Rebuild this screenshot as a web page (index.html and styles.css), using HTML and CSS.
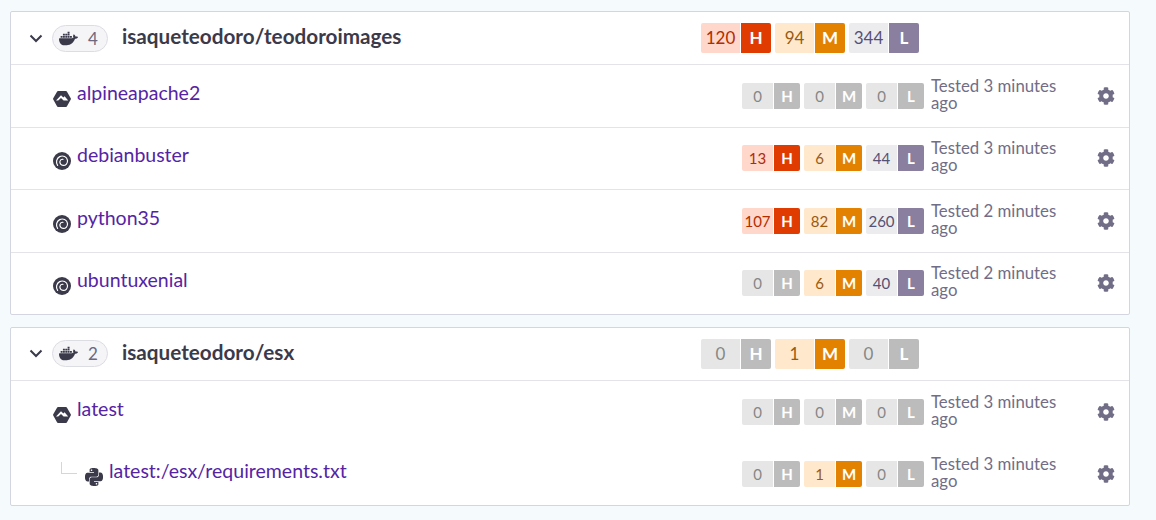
FILE: index.html
```html
<!DOCTYPE html>
<html lang="en">
<head>
  <meta charset="UTF-8">
  <title>Projects</title>
  <link rel="stylesheet" href="styles.css">
</head>
<body>
  <svg class="sprite" xmlns="http://www.w3.org/2000/svg">
    <symbol id="i-docker" viewBox="0 0 24 24"><path d="M13.983 11.078h2.119a.186.186 0 00.186-.185V9.006a.186.186 0 00-.186-.186h-2.119a.185.185 0 00-.185.185v1.888c0 .102.083.185.185.185m-2.954-5.43h2.118a.186.186 0 00.186-.186V3.574a.186.186 0 00-.186-.185h-2.118a.185.185 0 00-.185.185v1.888c0 .102.082.185.185.185m0 2.716h2.118a.187.187 0 00.186-.186V6.29a.186.186 0 00-.186-.185h-2.118a.185.185 0 00-.185.185v1.887c0 .102.082.185.185.186m-2.93 0h2.12a.186.186 0 00.184-.186V6.29a.185.185 0 00-.185-.185H8.1a.185.185 0 00-.185.185v1.887c0 .102.083.185.185.186m-2.964 0h2.119a.186.186 0 00.185-.186V6.29a.185.185 0 00-.185-.185H5.136a.186.186 0 00-.186.185v1.887c0 .102.084.185.186.186m5.893 2.715h2.118a.186.186 0 00.186-.185V9.006a.186.186 0 00-.186-.186h-2.118a.185.185 0 00-.185.185v1.888c0 .102.082.185.185.185m-2.93 0h2.12a.185.185 0 00.184-.185V9.006a.185.185 0 00-.184-.186h-2.12a.185.185 0 00-.184.185v1.888c0 .102.083.185.185.185m-2.964 0h2.119a.185.185 0 00.185-.185V9.006a.185.185 0 00-.184-.186h-2.12a.186.186 0 00-.186.186v1.887c0 .102.084.185.186.185m-2.92 0h2.12a.185.185 0 00.184-.185V9.006a.185.185 0 00-.184-.186h-2.12a.185.185 0 00-.185.185v1.888c0 .102.083.185.185.185M23.763 9.89c-.065-.051-.672-.51-1.954-.51-.338.001-.676.03-1.01.087-.248-1.7-1.653-2.53-1.716-2.566l-.344-.199-.226.327c-.284.438-.49.922-.612 1.43-.23.97-.09 1.882.403 2.661-.595.332-1.55.413-1.744.42H.751a.751.751 0 00-.75.748 11.376 11.376 0 00.692 4.062c.545 1.428 1.355 2.48 2.41 3.124 1.18.723 3.1 1.137 5.275 1.137.983.003 1.963-.086 2.93-.266a12.248 12.248 0 003.823-1.389c.98-.567 1.86-1.288 2.61-2.136 1.252-1.418 1.998-2.997 2.553-4.4h.221c1.372 0 2.215-.549 2.68-1.009.309-.293.55-.65.707-1.046l.098-.288Z"/></symbol>
    <symbol id="i-gear" viewBox="0 0 512 512"><path d="M487.4 315.7l-42.6-24.6c4.3-23.2 4.3-47 0-70.2l42.6-24.6c4.9-2.8 7.1-8.6 5.5-14-11.1-35.6-30-67.8-54.7-94.6-3.8-4.1-10-5.1-14.8-2.3L380.8 110c-17.9-15.4-38.5-27.3-60.8-35.1V25.8c0-5.6-3.9-10.5-9.4-11.7-36.7-8.2-74.3-7.8-109.2 0-5.5 1.2-9.4 6.1-9.4 11.7V75c-22.2 7.9-42.8 19.8-60.8 35.1L88.7 85.5c-4.9-2.8-11-1.9-14.8 2.3-24.7 26.7-43.6 58.9-54.7 94.6-1.7 5.4.6 11.2 5.5 14L67.3 221c-4.3 23.2-4.3 47 0 70.2l-42.6 24.6c-4.9 2.8-7.1 8.6-5.5 14 11.1 35.6 30 67.8 54.7 94.6 3.8 4.1 10 5.1 14.8 2.3l42.6-24.6c17.9 15.4 38.5 27.3 60.8 35.1v49.2c0 5.6 3.9 10.5 9.4 11.7 36.7 8.2 74.3 7.8 109.2 0 5.5-1.2 9.4-6.1 9.4-11.7v-49.2c22.2-7.9 42.8-19.8 60.8-35.1l42.6 24.6c4.9 2.8 11 1.9 14.8-2.3 24.7-26.7 43.6-58.9 54.7-94.6 1.5-5.5-.7-11.3-5.6-14.1zM256 336c-44.1 0-80-35.9-80-80s35.9-80 80-80 80 35.9 80 80-35.9 80-80 80z"/></symbol>
    <symbol id="i-python" viewBox="0 0 24 24"><path d="M14.25.18l.9.2.73.26.59.3.45.32.34.34.25.34.16.33.1.3.04.26.02.2-.01.13V8.5l-.05.63-.13.55-.21.46-.26.38-.3.31-.33.25-.35.19-.35.14-.33.1-.3.07-.26.04-.21.02H8.77l-.69.05-.59.14-.5.22-.41.27-.33.32-.27.35-.2.36-.15.37-.1.35-.07.32-.04.27-.02.21v3.06H3.17l-.21-.03-.28-.07-.32-.12-.35-.18-.36-.26-.36-.36-.35-.46-.32-.59-.28-.73-.21-.88-.14-1.05-.05-1.23.06-1.22.16-1.04.24-.87.32-.71.36-.57.4-.44.42-.33.42-.24.4-.16.36-.1.32-.05.24-.01h.16l.06.01h8.16v-.83H6.18l-.01-2.75-.02-.37.05-.34.11-.31.17-.28.25-.26.31-.23.38-.2.44-.18.51-.15.58-.12.64-.1.71-.06.77-.04.84-.02 1.27.05zm-6.3 1.98l-.23.33-.08.41.08.41.23.34.33.22.41.09.41-.09.33-.22.23-.34.08-.41-.08-.41-.23-.33-.33-.22-.41-.09-.41.09zm13.09 3.95l.28.06.32.12.35.18.36.27.36.35.35.47.32.59.28.73.21.88.14 1.04.05 1.23-.06 1.23-.16 1.04-.24.86-.32.71-.36.57-.4.45-.42.33-.42.24-.4.16-.36.09-.32.05-.24.02-.16-.01h-8.22v.82h5.84l.01 2.76.02.36-.05.34-.11.31-.17.29-.25.25-.31.24-.38.2-.44.17-.51.15-.58.13-.64.09-.71.07-.77.04-.84.01-1.27-.04-1.07-.14-.9-.2-.73-.25-.59-.3-.45-.33-.34-.34-.25-.34-.16-.33-.1-.3-.04-.25-.02-.2.01-.13v-5.34l.05-.64.13-.54.21-.46.26-.38.3-.32.33-.24.35-.2.35-.14.33-.1.3-.06.26-.04.21-.02.13-.01h5.84l.69-.05.59-.14.5-.21.41-.28.33-.32.27-.35.2-.36.15-.36.1-.35.07-.32.04-.28.02-.21V6.07h2.09l.14.01zm-6.47 14.25l-.23.33-.08.41.08.41.23.33.33.23.41.08.41-.08.33-.23.23-.33.08-.41-.08-.41-.23-.33-.33-.23-.41-.08-.41.08z"/></symbol>
    <symbol id="i-alpine" viewBox="0 0 18 16"><path fill-rule="evenodd" d="M5 0h8a1 1 0 0 1 .85.47l3.9 6.9a1.2 1.2 0 0 1 0 1.2l-3.9 6.95A1 1 0 0 1 13 16H5a1 1 0 0 1-.85-.48L.25 8.57a1.2 1.2 0 0 1 0-1.2l3.9-6.9A1 1 0 0 1 5 0zm3 4.2L3 9.4h2.2L8 6.9l2.6 2.5h4.6l-3.6-4.2-1.3 1.3L8 4.2z"/></symbol>
    <symbol id="i-debian" viewBox="0 0 18 18"><circle cx="9" cy="9" r="9"/><path fill="none" stroke="#fff" stroke-width="1.2" stroke-linecap="round" d="M4.6 13.4C2.6 10.6 3.4 6.3 6.7 4.6c3.3-1.6 7.2.2 7.8 3.8.4 2.8-1.7 5.2-4.4 5-2.1-.2-3.5-2-3.2-3.9.3-1.5 1.6-2.4 3-2.2"/></symbol>
  </svg>

  <section class="card">
    <header class="card-head">
      <svg class="chevron" viewBox="0 0 14 9"><path d="M1.5 1.5L7 7l5.5-5.5"/></svg>
      <span class="pill"><svg class="pill-icon"><use href="#i-docker"/></svg>4</span>
      <h2 class="card-title">isaqueteodoro/teodoroimages</h2>
      <div class="badges badges-lg">
        <div class="badge high"><span class="count">120</span><span class="tag">H</span></div>
        <div class="badge med"><span class="count">94</span><span class="tag">M</span></div>
        <div class="badge low"><span class="count">344</span><span class="tag">L</span></div>
      </div>
    </header>

    <div class="row">
      <div class="name"><svg class="os-icon"><use href="#i-alpine"/></svg><a href="#">alpineapache2</a></div>
      <div class="badges">
        <div class="badge"><span class="count">0</span><span class="tag">H</span></div>
        <div class="badge"><span class="count">0</span><span class="tag">M</span></div>
        <div class="badge"><span class="count">0</span><span class="tag">L</span></div>
      </div>
      <div class="tested">Tested 3 minutes ago</div>
      <svg class="gear"><use href="#i-gear"/></svg>
    </div>
    <div class="row">
      <div class="name"><svg class="os-icon"><use href="#i-debian"/></svg><a href="#">debianbuster</a></div>
      <div class="badges">
        <div class="badge high"><span class="count">13</span><span class="tag">H</span></div>
        <div class="badge med"><span class="count">6</span><span class="tag">M</span></div>
        <div class="badge low"><span class="count">44</span><span class="tag">L</span></div>
      </div>
      <div class="tested">Tested 3 minutes ago</div>
      <svg class="gear"><use href="#i-gear"/></svg>
    </div>
    <div class="row">
      <div class="name"><svg class="os-icon"><use href="#i-debian"/></svg><a href="#">python35</a></div>
      <div class="badges">
        <div class="badge high"><span class="count">107</span><span class="tag">H</span></div>
        <div class="badge med"><span class="count">82</span><span class="tag">M</span></div>
        <div class="badge low"><span class="count">260</span><span class="tag">L</span></div>
      </div>
      <div class="tested">Tested 2 minutes ago</div>
      <svg class="gear"><use href="#i-gear"/></svg>
    </div>
    <div class="row">
      <div class="name"><svg class="os-icon"><use href="#i-debian"/></svg><a href="#">ubuntuxenial</a></div>
      <div class="badges">
        <div class="badge"><span class="count">0</span><span class="tag">H</span></div>
        <div class="badge med"><span class="count">6</span><span class="tag">M</span></div>
        <div class="badge low"><span class="count">40</span><span class="tag">L</span></div>
      </div>
      <div class="tested">Tested 2 minutes ago</div>
      <svg class="gear"><use href="#i-gear"/></svg>
    </div>
  </section>

  <section class="card">
    <header class="card-head">
      <svg class="chevron" viewBox="0 0 14 9"><path d="M1.5 1.5L7 7l5.5-5.5"/></svg>
      <span class="pill"><svg class="pill-icon"><use href="#i-docker"/></svg>2</span>
      <h2 class="card-title">isaqueteodoro/esx</h2>
      <div class="badges badges-lg">
        <div class="badge"><span class="count">0</span><span class="tag">H</span></div>
        <div class="badge med"><span class="count">1</span><span class="tag">M</span></div>
        <div class="badge"><span class="count">0</span><span class="tag">L</span></div>
      </div>
    </header>

    <div class="row row-plain">
      <div class="name"><svg class="os-icon"><use href="#i-alpine"/></svg><a href="#">latest</a></div>
      <div class="badges">
        <div class="badge"><span class="count">0</span><span class="tag">H</span></div>
        <div class="badge"><span class="count">0</span><span class="tag">M</span></div>
        <div class="badge"><span class="count">0</span><span class="tag">L</span></div>
      </div>
      <div class="tested">Tested 3 minutes ago</div>
      <svg class="gear"><use href="#i-gear"/></svg>
    </div>
    <div class="row row-plain">
      <div class="name name-child"><span class="branch"></span><svg class="os-icon"><use href="#i-python"/></svg><a href="#">latest:/esx/requirements.txt</a></div>
      <div class="badges">
        <div class="badge"><span class="count">0</span><span class="tag">H</span></div>
        <div class="badge med"><span class="count">1</span><span class="tag">M</span></div>
        <div class="badge"><span class="count">0</span><span class="tag">L</span></div>
      </div>
      <div class="tested">Tested 3 minutes ago</div>
      <svg class="gear"><use href="#i-gear"/></svg>
    </div>
  </section>
</body>
</html>
```

FILE: styles.css
```css
* {
  margin: 0;
  padding: 0;
  box-sizing: border-box;
}

body {
  background: #f5fafd;
  font-family: "Lato", sans-serif;
  color: #3b3a4a;
  padding: 11px 26px 0 10px;
}

.sprite {
  display: none;
}

.card {
  background: #fff;
  border: 1px solid #d3d6e0;
  border-radius: 2px;
  margin-bottom: 12px;
}

.card-head {
  display: flex;
  align-items: center;
  height: 53px;
  padding: 0 210px 0 18px;
  border-bottom: 1px solid #e3e3e8;
}

.chevron {
  width: 14px;
  height: 9px;
  fill: none;
  stroke: #3b3a4a;
  stroke-width: 2;
}

.pill {
  display: flex;
  align-items: center;
  width: 56px;
  height: 27px;
  margin-left: 9px;
  padding-left: 6px;
  background: #f5f5f8;
  border: 1px solid #dcdce3;
  border-radius: 14px;
  font-size: 17px;
  color: #6b6880;
}

.pill-icon {
  width: 19px;
  height: 19px;
  margin-right: 10px;
  fill: #3b3a4a;
}

.card-title {
  flex: 1;
  margin: 0 0 4px 14px;
  font-size: 20.7px;
  font-weight: 700;
  color: #3b3a4a;
}

.row {
  display: flex;
  align-items: center;
  height: 62.67px;
  padding: 0 14px 0 42px;
  border-bottom: 1px solid #e3e3e8;
}

.row:last-child {
  height: 61px;
  border-bottom: 0;
}

.row.row-plain {
  height: 62px;
  border-bottom: 0;
}

.name {
  flex: 1;
  display: flex;
  align-items: flex-start;
  font-size: 19.5px;
}

.name a {
  color: #5524a5;
  text-decoration: none;
  margin-top: -3px;
  margin-left: 6px;
}

.os-icon {
  width: 18px;
  height: 18px;
  margin-top: 6px;
  fill: #3b3a4a;
}

.name-child {
  padding-left: 32px;
  position: relative;
}

.branch {
  position: absolute;
  left: 8px;
  top: 0;
  width: 16px;
  height: 12px;
  border-left: 1px solid #d3d6e0;
  border-bottom: 1px solid #d3d6e0;
}

.badges {
  display: flex;
  gap: 4px;
}

.badge {
  display: flex;
  width: 58px;
  height: 26px;
  border-radius: 2px;
  overflow: hidden;
  font-size: 15px;
  line-height: 26px;
  text-align: center;
}

.count {
  flex: 1;
  background: #e6e6e6;
  color: #868686;
  margin-right: 1px;
}

.tag {
  width: 26px;
  background: #bcbcbc;
  color: #fff;
  font-weight: 700;
}

.high .count { background: #ffd7cb; color: #b12c00; }
.high .tag { background: #e03b00; }
.med .count { background: #ffe8cc; color: #995a12; }
.med .tag { background: #e38100; }
.low .count { background: #ececee; color: #555075; }
.low .tag { background: #8a7f9f; }

.badges-lg .badge {
  width: 70px;
  height: 30px;
  font-size: 17px;
  line-height: 30px;
}

.badges-lg .tag {
  width: 30px;
}

.tested {
  width: 147px;
  margin: 0 0 4px 7px;
  font-size: 16.8px;
  line-height: 17px;
  color: #716d87;
}

.gear {
  width: 18px;
  height: 18px;
  margin-left: 19px;
  fill: #716d87;
}
```
